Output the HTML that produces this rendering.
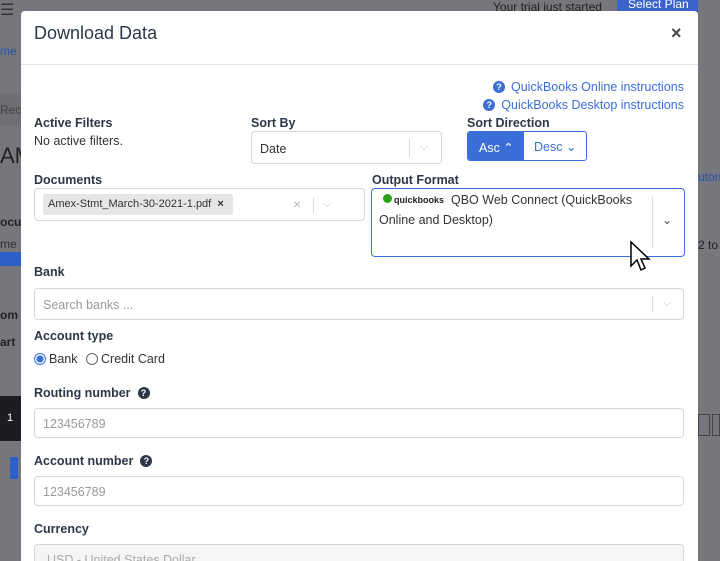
<!DOCTYPE html>
<html><head><style>
*{box-sizing:border-box;margin:0;padding:0}
html,body{width:720px;height:561px;overflow:hidden}
body{background:#76777c;font-family:"Liberation Sans",sans-serif;position:relative;color:#333}
.a{position:absolute}
.modal{position:absolute;left:21px;top:11px;width:677px;height:550px;background:#fff;border-radius:4px 4px 0 0;overflow:hidden}
.lbl{position:absolute;font-size:12.5px;font-weight:bold;color:#2d3748;display:flex;align-items:center}
.inp{position:absolute;border:1px solid #d6d6d6;border-radius:4px;background:#fff;font-size:12.5px;color:#999}
.link{position:absolute;font-size:12.5px;color:#3b6fd8;right:14px;display:flex;align-items:center}
.q{display:inline-block;width:12px;height:12px;border-radius:50%;background:#3b6fd8;color:#fff;font-size:9px;font-weight:bold;text-align:center;line-height:12px;margin-right:6px}
.qd{background:#2d3748}
.sep{position:absolute;width:1px;background:#ddd}
.chev{position:absolute;color:#bbb;font-size:11px}
</style></head><body>
<div class="a" style="left:0;top:0;font-size:16px;color:#333">☰</div>
<div class="a" style="left:493px;top:0;font-size:12px;color:#222">Your trial just started</div>
<div class="a" style="left:617px;top:0;width:81px;height:12px;background:#3c64c8;color:#fff;font-size:12px;padding-left:11px;line-height:8px">Select Plan</div>
<div class="a" style="left:0;top:44px;font-size:12px;color:#2c4fb0">me</div>
<div class="a" style="left:0;top:93px;width:21px;height:32px;background:#6e6f74"></div>
<div class="a" style="left:0;top:103px;font-size:12px;color:#444">Rec</div>
<div class="a" style="left:0;top:143px;font-size:22px;color:#222">AM</div>
<div class="a" style="left:0;top:215px;font-size:12px;color:#222;font-weight:bold">ocu</div>
<div class="a" style="left:0;top:237px;font-size:12px;color:#333">me</div>
<div class="a" style="left:0;top:252px;width:21px;height:14px;background:#2c5fc8"></div>
<div class="a" style="left:0;top:308px;font-size:12px;font-weight:bold;color:#222">om</div>
<div class="a" style="left:0;top:335px;font-size:12px;font-weight:bold;color:#222">art</div>
<div class="a" style="left:0;top:396px;width:21px;height:45px;background:#1c1d22;color:#fff;font-size:11px;padding:16px 0 0 7px">1</div>
<div class="a" style="left:10px;top:457px;width:8px;height:22px;background:#2c5fc8"></div>
<div class="a" style="left:698px;top:170px;font-size:12px;color:#2c4fb0">utori</div>
<div class="a" style="left:698px;top:238px;font-size:12px;color:#222">2 to</div>
<div class="a" style="left:698px;top:414px;width:12px;height:22px;border:1px solid #444"></div>
<div class="a" style="left:712px;top:414px;width:8px;height:22px;border:1px solid #444"></div>

<div class="modal">
 <div class="a" style="left:13px;top:12px;font-size:18px;color:#2d3748">Download Data</div>
 <div class="a" style="left:650px;top:12px;font-size:18px;color:#444;font-weight:bold">×</div>
 <div class="a" style="left:0;top:53px;width:677px;height:1px;background:#e2e2e2"></div>
 <div class="link" style="top:69px"><span class="q">?</span>QuickBooks Online instructions</div>
 <div class="link" style="top:87px"><span class="q">?</span>QuickBooks Desktop instructions</div>

 <div class="lbl" style="left:13px;top:105px">Active Filters</div>
 <div class="a" style="left:13px;top:123px;font-size:12.5px;color:#333">No active filters.</div>
 <div class="lbl" style="left:230px;top:105px">Sort By</div>
 <div class="inp" style="left:230px;top:120px;width:191px;height:33px;color:#333;padding:10px 8px">Date</div>
 <div class="sep" style="left:388px;top:128px;height:18px"></div>
 <div class="chev" style="left:399px;top:130px">⌵</div>
 <div class="lbl" style="left:446px;top:105px">Sort Direction</div>
 <div class="a" style="left:446px;top:120px;width:120px;height:30px;border:1px solid #3b6fd8;border-radius:3px;overflow:hidden;font-size:12.5px">
  <div class="a" style="left:0;top:0;width:56px;height:30px;background:#3b6fd8;color:#fff;padding:8px 0 0 11px">Asc ⌃</div>
  <div class="a" style="left:66px;top:7px;color:#3b6fd8">Desc ⌄</div>
 </div>

 <div class="lbl" style="left:13px;top:162px">Documents</div>
 <div class="inp" style="left:13px;top:177px;width:331px;height:33px"></div>
 <div class="a" style="left:22px;top:183px;width:190px;height:21px;background:#e6e6e6;border-radius:2px;font-size:11px;color:#333;padding:4px 5px">Amex-Stmt_March-30-2021-1.pdf &nbsp;<b>×</b></div>
 <div class="a" style="left:272px;top:185px;color:#bbb;font-size:14px">×</div>
 <div class="sep" style="left:292px;top:186px;height:16px"></div>
 <div class="chev" style="left:302px;top:187px">⌵</div>

 <div class="lbl" style="left:351px;top:162px">Output Format</div>
 <div class="a" style="left:350px;top:177px;width:314px;height:69px;border:1.5px solid #3b6fd8;border-radius:4px"></div>
 <div class="a" style="left:362px;top:183px;width:9px;height:9px;border-radius:50%;background:#2ca01c"></div>
 <div class="a" style="left:373px;top:184px;font-size:9px;font-weight:bold;color:#222">quickbooks</div>
 <div class="a" style="left:430px;top:182px;font-size:12.5px;color:#333">QBO Web Connect (QuickBooks</div>
 <div class="a" style="left:358px;top:202px;font-size:12.5px;color:#333">Online and Desktop)</div>
 <div class="sep" style="left:631px;top:185px;height:52px"></div>
 <div class="a" style="left:641px;top:202px;font-size:12px;color:#444">⌄</div>
 <svg class="a" style="left:608px;top:229px" width="26" height="36" viewBox="0 0 26 36"><path d="M2 2 L2 26 L8 20 L12 30 L16 28 L12 19 L20 19 Z" fill="#fff" stroke="#000" stroke-width="1.5"/></svg>

 <div class="lbl" style="left:13px;top:254px">Bank</div>
 <div class="inp" style="left:13px;top:277px;width:650px;height:32px;padding:9px 8px">Search banks ...</div>
 <div class="sep" style="left:631px;top:285px;height:16px"></div>
 <div class="chev" style="left:642px;top:286px">⌵</div>

 <div class="lbl" style="left:13px;top:318px">Account type</div>
 <div class="a" style="left:13px;top:342px;width:12px;height:12px;border-radius:50%;border:1px solid #3b6fd8;background:radial-gradient(#3b6fd8 45%,#fff 55%)"></div>
 <div class="a" style="left:28px;top:341px;font-size:12.5px;color:#333">Bank</div>
 <div class="a" style="left:65px;top:342px;width:12px;height:12px;border-radius:50%;border:1px solid #666"></div>
 <div class="a" style="left:80px;top:341px;font-size:12.5px;color:#333">Credit Card</div>

 <div class="lbl" style="left:13px;top:375px">Routing number <span class="q qd" style="margin-left:7px">?</span></div>
 <div class="inp" style="left:13px;top:397px;width:650px;height:30px;padding:8px 8px">123456789</div>
 <div class="lbl" style="left:13px;top:443px">Account number <span class="q qd" style="margin-left:7px">?</span></div>
 <div class="inp" style="left:13px;top:465px;width:650px;height:30px;padding:8px 8px">123456789</div>
 <div class="lbl" style="left:13px;top:511px">Currency</div>
 <div class="inp" style="left:13px;top:533px;width:650px;height:30px;padding:8px 12px;background:#f5f5f5;color:#aaa">USD - United States Dollar</div>
</div>
</body></html>
